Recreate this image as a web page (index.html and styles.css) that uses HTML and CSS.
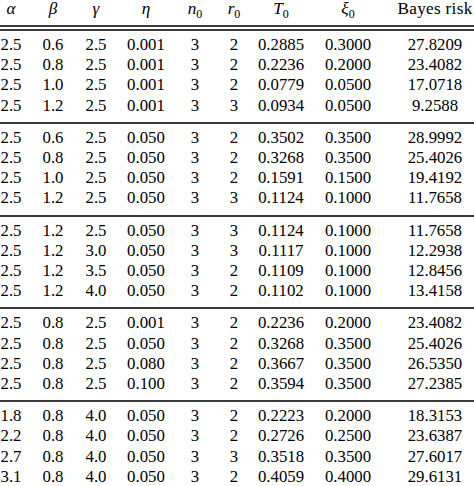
FILE: index.html
```html
<!DOCTYPE html>
<html>
<head>
<meta charset="utf-8">
<link rel="stylesheet" href="styles.css">
</head>
<body>
<div class="tbl">
  <div class="row head">
    <div class="m">α</div><div class="m">β</div><div class="m">γ</div><div class="m">η</div>
    <div><span class="m">n</span><sub>0</sub></div>
    <div><span class="m">r</span><sub>0</sub></div>
    <div><span class="m">T</span><sub>0</sub></div>
    <div><span class="m">ξ</span><sub>0</sub></div>
    <div class="txt">Bayes risk</div>
  </div>
  <div class="dbl"></div>
  <div class="sec first">
    <div class="row"><div>2.5</div><div>0.6</div><div>2.5</div><div>0.001</div><div>3</div><div>2</div><div>0.2885</div><div>0.3000</div><div>27.8209</div></div>
    <div class="row"><div>2.5</div><div>0.8</div><div>2.5</div><div>0.001</div><div>3</div><div>2</div><div>0.2236</div><div>0.2000</div><div>23.4082</div></div>
    <div class="row"><div>2.5</div><div>1.0</div><div>2.5</div><div>0.001</div><div>3</div><div>2</div><div>0.0779</div><div>0.0500</div><div>17.0718</div></div>
    <div class="row"><div>2.5</div><div>1.2</div><div>2.5</div><div>0.001</div><div>3</div><div>3</div><div>0.0934</div><div>0.0500</div><div>9.2588</div></div>
  </div>
  <div class="sec">
    <div class="row"><div>2.5</div><div>0.6</div><div>2.5</div><div>0.050</div><div>3</div><div>2</div><div>0.3502</div><div>0.3500</div><div>28.9992</div></div>
    <div class="row"><div>2.5</div><div>0.8</div><div>2.5</div><div>0.050</div><div>3</div><div>2</div><div>0.3268</div><div>0.3500</div><div>25.4026</div></div>
    <div class="row"><div>2.5</div><div>1.0</div><div>2.5</div><div>0.050</div><div>3</div><div>2</div><div>0.1591</div><div>0.1500</div><div>19.4192</div></div>
    <div class="row"><div>2.5</div><div>1.2</div><div>2.5</div><div>0.050</div><div>3</div><div>3</div><div>0.1124</div><div>0.1000</div><div>11.7658</div></div>
  </div>
  <div class="sec">
    <div class="row"><div>2.5</div><div>1.2</div><div>2.5</div><div>0.050</div><div>3</div><div>3</div><div>0.1124</div><div>0.1000</div><div>11.7658</div></div>
    <div class="row"><div>2.5</div><div>1.2</div><div>3.0</div><div>0.050</div><div>3</div><div>3</div><div>0.1117</div><div>0.1000</div><div>12.2938</div></div>
    <div class="row"><div>2.5</div><div>1.2</div><div>3.5</div><div>0.050</div><div>3</div><div>2</div><div>0.1109</div><div>0.1000</div><div>12.8456</div></div>
    <div class="row"><div>2.5</div><div>1.2</div><div>4.0</div><div>0.050</div><div>3</div><div>2</div><div>0.1102</div><div>0.1000</div><div>13.4158</div></div>
  </div>
  <div class="sec">
    <div class="row"><div>2.5</div><div>0.8</div><div>2.5</div><div>0.001</div><div>3</div><div>2</div><div>0.2236</div><div>0.2000</div><div>23.4082</div></div>
    <div class="row"><div>2.5</div><div>0.8</div><div>2.5</div><div>0.050</div><div>3</div><div>2</div><div>0.3268</div><div>0.3500</div><div>25.4026</div></div>
    <div class="row"><div>2.5</div><div>0.8</div><div>2.5</div><div>0.080</div><div>3</div><div>2</div><div>0.3667</div><div>0.3500</div><div>26.5350</div></div>
    <div class="row"><div>2.5</div><div>0.8</div><div>2.5</div><div>0.100</div><div>3</div><div>2</div><div>0.3594</div><div>0.3500</div><div>27.2385</div></div>
  </div>
  <div class="sec">
    <div class="row"><div>1.8</div><div>0.8</div><div>4.0</div><div>0.050</div><div>3</div><div>2</div><div>0.2223</div><div>0.2000</div><div>18.3153</div></div>
    <div class="row"><div>2.2</div><div>0.8</div><div>4.0</div><div>0.050</div><div>3</div><div>2</div><div>0.2726</div><div>0.2500</div><div>23.6387</div></div>
    <div class="row"><div>2.7</div><div>0.8</div><div>4.0</div><div>0.050</div><div>3</div><div>3</div><div>0.3518</div><div>0.3500</div><div>27.6017</div></div>
    <div class="row"><div>3.1</div><div>0.8</div><div>4.0</div><div>0.050</div><div>3</div><div>2</div><div>0.4059</div><div>0.4000</div><div>29.6131</div></div>
  </div>
</div>
</body>
</html>
```

FILE: styles.css
```css
html, body {
  margin: 0;
  padding: 0;
  background: #fff;
  overflow: hidden;
}
body {
  width: 474px;
  height: 486px;
}
.tbl {
  width: 490px;
  margin-left: -8px;
  font-family: "Liberation Serif", "DejaVu Serif", serif;
  font-size: 16.8px;
  color: #000;
}
.row {
  display: grid;
  grid-template-columns: 38px 46px 40px 60px 38px 40px 54px 80px 94px;
  line-height: 20.2px;
  text-align: center;
  white-space: nowrap;
}
.head {
  line-height: 18px;
  height: 25px;
  font-size: 17.2px;
}
.txt {
  letter-spacing: 0.3px;
}
.m {
  font-style: italic;
}
sub {
  font-size: 0.7em;
  vertical-align: -0.3em;
  line-height: 0;
  font-style: normal;
}
.dbl {
  height: 2px;
  border-top: 2px solid #3a3a3a;
  border-bottom: 2px solid #3a3a3a;
}
.sec {
  padding: 4px 0 6px;
  border-top: 2px solid #3a3a3a;
}
.sec.first {
  border-top: none;
}
```
